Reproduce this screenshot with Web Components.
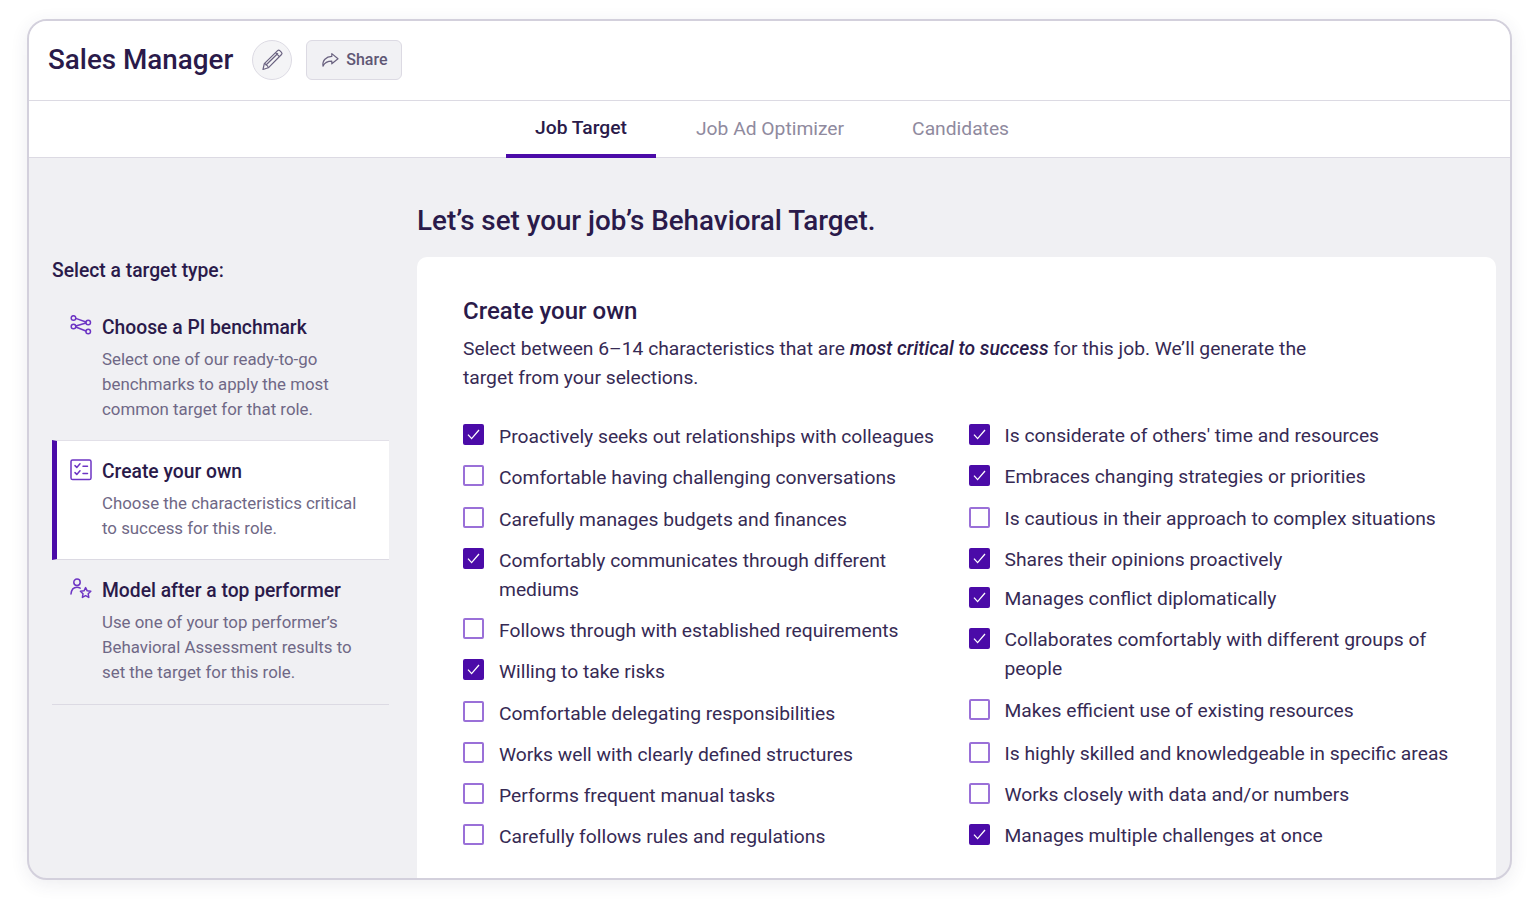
<!DOCTYPE html>
<html lang="en">
<head>
<meta charset="utf-8">
<title>Sales Manager</title>
<style>
    html, body {
        margin: 0;
        height: 100%;
        background: #fff;
        font-family: Roboto, "Liberation Sans", sans-serif;
    }
    body {
        padding: 19px 24px 0 27px;
        box-sizing: border-box;
        overflow: hidden;
    }
</style>
</head>
<body>
<job-frame>
    <job-header slot="header" title-text="Sales Manager"></job-header>
    <job-tabs slot="tabs"></job-tabs>
    <target-sidebar slot="side">
        <target-option heading="Choose a PI benchmark" icon="benchmark">Select one of our ready-to-go benchmarks to apply the most common target for that role.</target-option>
        <target-option heading="Create your own" icon="list" active>Choose the characteristics critical to success for this role.</target-option>
        <target-option heading="Model after a top performer" icon="performer" last>Use one of your top performer’s Behavioral Assessment results to set the target for this role.</target-option>
    </target-sidebar>
    <target-panel slot="main">
        <check-list slot="left">
            <check-item checked>Proactively seeks out relationships with colleagues</check-item>
            <check-item>Comfortable having challenging conversations</check-item>
            <check-item style="margin-top:.6px">Carefully manages budgets and finances</check-item>
            <check-item checked style="margin-top:-.6px">Comfortably communicates through different mediums</check-item>
            <check-item>Follows through with established requirements</check-item>
            <check-item checked>Willing to take risks</check-item>
            <check-item style="margin-top:.6px">Comfortable delegating responsibilities</check-item>
            <check-item>Works well with clearly defined structures</check-item>
            <check-item style="margin-top:-.6px">Performs frequent manual tasks</check-item>
            <check-item>Carefully follows rules and regulations</check-item>
        </check-list>
        <check-list slot="right">
            <check-item checked>Is considerate of others' time and resources</check-item>
            <check-item checked>Embraces changing strategies or priorities</check-item>
            <check-item style="margin-top:.6px">Is cautious in their approach to complex situations</check-item>
            <check-item checked style="margin-top:-.6px">Shares their opinions proactively</check-item>
            <check-item checked style="margin-top:-1.5px">Manages conflict diplomatically</check-item>
            <check-item checked>Collaborates comfortably with different groups of people</check-item>
            <check-item>Makes efficient use of existing resources</check-item>
            <check-item style="margin-top:2px">Is highly skilled and knowledgeable in specific areas</check-item>
            <check-item>Works closely with data and/or numbers</check-item>
            <check-item checked>Manages multiple challenges at once</check-item>
        </check-list>
    </target-panel>
</job-frame>

<script>
const ICONS = {
    benchmark: `<svg width="22" height="22" viewBox="0 0 22 22" fill="none" stroke="#6d35c4" stroke-width="1.5" stroke-linecap="round">
        <circle cx="3.5" cy="3" r="2.3"/><circle cx="3.5" cy="11.5" r="2.3"/>
        <circle cx="18.2" cy="7.5" r="2.3"/><circle cx="18.2" cy="16.5" r="2.3"/>
        <path d="M5.8 3.4 15.9 7M5.8 11 15.9 8M5.8 12 15.9 16"/></svg>`,
    list: `<svg width="22" height="22" viewBox="0 0 22 22" fill="none" stroke="#6d35c4" stroke-width="1.5" stroke-linecap="round" stroke-linejoin="round">
        <rect x="1" y="1" width="20" height="19.5" rx="1.6"/>
        <path d="M5 6.6 6.8 8.4 10 4.8M5 13.6 6.8 15.4 10 11.8M13 7.2h4.5M13 14.4h4.5"/></svg>`,
    performer: `<svg width="22" height="22" viewBox="0 0 22 22" fill="none" stroke="#6d35c4" stroke-width="1.5" stroke-linecap="round" stroke-linejoin="round">
        <circle cx="7" cy="4.2" r="3.2"/>
        <path d="M1 16C1.4 11.5 4 9.2 7 9.2c1.2 0 2.2.3 3.2.9"/>
        <path d="m15.6 9.6 1.6 3.2 3.6.5-2.6 2.5.6 3.6-3.2-1.7-3.2 1.7.6-3.6-2.6-2.5 3.6-.5z"/></svg>`
};

class JobFrame extends HTMLElement {
    constructor() {
        super();
        this.attachShadow({ mode: "open" });
        this.shadowRoot.innerHTML = `
        <style>
            :host {
                display: flex;
                flex-direction: column;
                box-sizing: border-box;
                width: 1485px;
                height: 861px;
                border: 2px solid #d3d0dc;
                border-radius: 20px;
                background: #f0f0f3;
                overflow: hidden;
                box-shadow: 0 4px 18px rgba(60, 50, 90, .09);
            }
            .body {
                flex: 1;
                min-height: 0;
                display: flex;
                gap: 28px;
                padding: 0 15px 0 23px;
            }
        </style>
        <slot name="header"></slot>
        <slot name="tabs"></slot>
        <div class="body">
            <slot name="side"></slot>
            <slot name="main"></slot>
        </div>`;
    }
}

class JobHeader extends HTMLElement {
    constructor() {
        super();
        this.attachShadow({ mode: "open" });
        this.shadowRoot.innerHTML = `
        <style>
            :host {
                display: flex;
                align-items: center;
                flex: none;
                box-sizing: border-box;
                height: 80px;
                padding: 0 0 2px 19px;
                background: #fff;
                border-bottom: 1px solid #dcdae3;
            }
            h1 {
                margin: 0 19px 0 0;
                font-size: 27.8px;
                font-weight: 500;
                color: #2a1a4a;
            }
            .edit {
                display: flex;
                align-items: center;
                justify-content: center;
                box-sizing: border-box;
                width: 40px;
                height: 40px;
                margin-right: 14px;
                border: 1px solid #dcdae3;
                border-radius: 50%;
                background: #f4f4f6;
            }
            .share {
                display: flex;
                align-items: center;
                gap: 7px;
                box-sizing: border-box;
                width: 96px;
                height: 40px;
                padding-left: 14px;
                border: 1px solid #dcdae3;
                border-radius: 6px;
                background: #f1f1f4;
                color: #5f5774;
                font-size: 16px;
                font-weight: 500;
            }
        </style>
        <h1></h1>
        <div class="edit">
            <svg width="24" height="24" viewBox="0 0 24 24" fill="none" stroke="#6a6280" stroke-width="1.2" stroke-linejoin="round">
                <path d="M3 21.5 4.3 15.6 17.6 2.6a1.6 1.6 0 0 1 2.2 0l1.7 1.7a1.6 1.6 0 0 1 0 2.2L8.3 19.8z"/>
                <path d="M4.3 15.6c1 .1 1.6.5 1.8 1.4.9.1 1.9.7 2.2 2.8M15.5 4.7l3.9 3.9M6 17 18 5.2"/>
            </svg>
        </div>
        <div class="share">
            <svg width="18" height="16" viewBox="0 0 18 16" fill="none" stroke="#6a6280" stroke-width="1.2" stroke-linejoin="round">
                <path d="M10.8 1.6 17 6.8l-6.2 5V9.2C7 9.2 4 9.8 2 14.2 1 8.6 5.2 4.6 10.8 4.4z"/>
            </svg>
            <span>Share</span>
        </div>`;
        this.shadowRoot.querySelector("h1").textContent = this.getAttribute("title-text");
    }
}

class JobTabs extends HTMLElement {
    constructor() {
        super();
        this.attachShadow({ mode: "open" });
        this.shadowRoot.innerHTML = `
        <style>
            :host {
                display: flex;
                justify-content: flex-start;
                flex: none;
                box-sizing: border-box;
                height: 57px;
                padding-left: 477px;
                background: #fff;
                border-bottom: 1px solid #dcdae3;
                font-size: 19.25px;
            }
            .tab {
                display: flex;
                align-items: center;
                justify-content: center;
                box-sizing: border-box;
                height: 57px;
                padding-bottom: 3px;
                color: #8f8a9e;
            }
            .tab.on {
                width: 150px;
                margin-right: 40px;
                color: #2a1a4a;
                font-weight: 500;
                border-bottom: 4px solid #4b0ba8;
                padding-bottom: 0;
            }
            .tab.mid { margin-right: 68px; }
        </style>
        <div class="tab on">Job Target</div>
        <div class="tab mid">Job Ad Optimizer</div>
        <div class="tab">Candidates</div>`;
    }
}

class TargetSidebar extends HTMLElement {
    constructor() {
        super();
        this.attachShadow({ mode: "open" });
        this.shadowRoot.innerHTML = `
        <style>
            :host {
                display: block;
                flex: none;
                width: 337px;
                padding-top: 100px;
            }
            h3 {
                margin: 0 0 31px;
                font-size: 19.3px;
                line-height: 26px;
                font-weight: 500;
                color: #2a1a4a;
            }
        </style>
        <h3>Select a target type:</h3>
        <slot></slot>`;
    }
}

class TargetOption extends HTMLElement {
    constructor() {
        super();
        this.attachShadow({ mode: "open" });
        this.shadowRoot.innerHTML = `
        <style>
            :host {
                display: flex;
                gap: 10px;
                box-sizing: border-box;
                padding: 0 20px 18px 18px;
            }
            :host([active]) {
                background: #fff;
                border-left: 5px solid #4b0ba8;
                border-top: 1px solid #e2e0e8;
                border-bottom: 1px solid #dcdae3;
                padding: 18px 20px 18px 13px;
                margin-bottom: 18px;
            }
            :host([last]) {
                border-bottom: 1px solid #dcdae3;
                padding-bottom: 19px;
            }
            .icon { flex: none; width: 22px; height: 22px; margin-top: 0; }
            h4 {
                margin: 0 0 6px;
                font-size: 19.3px;
                line-height: 26px;
                font-weight: 500;
                color: #2a1a4a;
            }
            p {
                margin: 0;
                font-size: 16.85px;
                line-height: 25px;
                color: #6f6886;
            }
        </style>
        <div class="icon"></div>
        <div>
            <h4></h4>
            <p><slot></slot></p>
        </div>`;
        this.shadowRoot.querySelector("h4").textContent = this.getAttribute("heading");
        this.shadowRoot.querySelector(".icon").innerHTML = ICONS[this.getAttribute("icon")];
    }
}

class TargetPanel extends HTMLElement {
    constructor() {
        super();
        this.attachShadow({ mode: "open" });
        this.shadowRoot.innerHTML = `
        <style>
            :host {
                display: block;
                flex: none;
                width: 1079px;
                min-height: 0;
                padding-top: 43px;
                color: #2a1a4a;
            }
            h2 {
                margin: 0 0 16px;
                font-size: 27.8px;
                line-height: 40px;
                font-weight: 500;
            }
            .card {
                box-sizing: border-box;
                height: 640px;
                padding: 37px 40px 0 46px;
                background: #fff;
                border-radius: 10px 10px 0 0;
            }
            h3 {
                margin: 0 0 6px;
                font-size: 24px;
                line-height: 34px;
                font-weight: 500;
            }
            p {
                margin: 0 0 30px;
                width: 860px;
                font-size: 19.25px;
                line-height: 29px;
                color: #362a54;
            }
            em { font-weight: 500; color: #2a1a4a; }
            .cols {
                display: grid;
                grid-template-columns: 505.5px 1fr;
            }
        </style>
        <h2>Let’s set your job’s Behavioral Target.</h2>
        <div class="card">
            <h3>Create your own</h3>
            <p>Select between 6–14 characteristics that are <em>most critical to success</em> for this job. We’ll generate the target from your selections.</p>
            <div class="cols">
                <slot name="left"></slot>
                <slot name="right"></slot>
            </div>
        </div>`;
    }
}

class CheckList extends HTMLElement {
    constructor() {
        super();
        this.attachShadow({ mode: "open" });
        this.shadowRoot.innerHTML = `
        <style>
            :host {
                display: flex;
                flex-direction: column;
                gap: 12.2px;
                --box-top: 2px;
            }
            :host([slot="right"]) {
                margin-top: -1px;
                --box-top: 3px;
            }
        </style>
        <slot></slot>`;
    }
}

class CheckItem extends HTMLElement {
    constructor() {
        super();
        this.attachShadow({ mode: "open" });
        this.shadowRoot.innerHTML = `
        <style>
            :host {
                display: flex;
                gap: 15px;
                font-size: 19.25px;
                line-height: 29px;
                color: #362a54;
            }
            .box {
                flex: none;
                box-sizing: border-box;
                width: 21px;
                height: 21px;
                margin-top: var(--box-top);
                border: 2px solid #9a70d8;
                border-radius: 2px;
                background: #fff;
            }
            :host([checked]) .box {
                display: flex;
                align-items: center;
                justify-content: center;
                border-color: #4b0ba8;
                background: #4b0ba8;
            }
            svg { display: none; }
            :host([checked]) svg { display: block; }
        </style>
        <div class="box">
            <svg width="13" height="11" viewBox="0 0 13 11" fill="none" stroke="#fff" stroke-width="1.3">
                <path d="M1 5.6 4.6 9.6 12 1"/>
            </svg>
        </div>
        <div><slot></slot></div>`;
    }
}

customElements.define("job-frame", JobFrame);
customElements.define("job-header", JobHeader);
customElements.define("job-tabs", JobTabs);
customElements.define("target-sidebar", TargetSidebar);
customElements.define("target-option", TargetOption);
customElements.define("target-panel", TargetPanel);
customElements.define("check-list", CheckList);
customElements.define("check-item", CheckItem);
</script>
</body>
</html>
